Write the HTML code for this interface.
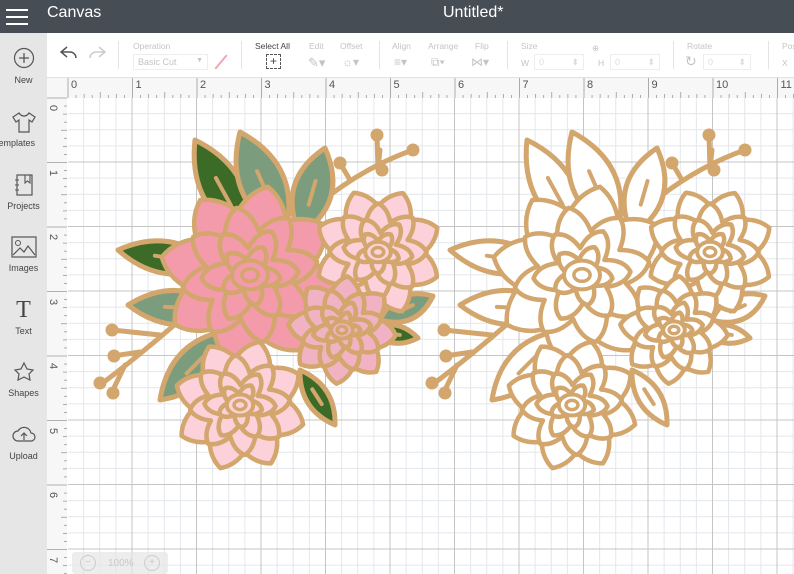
<!DOCTYPE html>
<html><head><meta charset="utf-8">
<style>
*{margin:0;padding:0;box-sizing:border-box}
body{width:794px;height:574px;overflow:hidden;font-family:"Liberation Sans",sans-serif;background:#fff;position:relative}
#top{position:absolute;left:0;top:0;width:794px;height:33px;background:#464d55;color:#fff}
#top .t{position:absolute;left:47px;top:4px;font-size:16px}
#top .u{position:absolute;left:443px;top:4px;font-size:16px}
.hb{position:absolute;left:6px;width:22px;height:2px;background:#fff}
#tool{position:absolute;left:47px;top:33px;width:747px;height:45px;background:#fff;border-bottom:1px solid #e2e2e2}
.lbl{position:absolute;font-size:8.5px;color:#c4c4c4}
.sep{position:absolute;top:8px;width:1px;height:28px;background:#e4e4e4}
#side{position:absolute;left:0;top:33px;width:47px;height:541px;background:#e6e6e7}
.si{position:absolute;width:47px;text-align:center;font-size:9px;color:#444}
#rtop{position:absolute;left:47px;top:78px;width:747px;height:20px;background:#f7f7f7}
#rleft{position:absolute;left:47px;top:98px;width:20px;height:476px;background:#f7f7f7}
#grid{position:absolute;left:68px;top:98px;width:726px;height:476px;
background-image:
linear-gradient(to right,#c4c4c4 1px,transparent 1px),
linear-gradient(to bottom,#c4c4c4 1px,transparent 1px),
linear-gradient(to right,#e3e6eb 1px,transparent 1px),
linear-gradient(to bottom,#e3e6eb 1px,transparent 1px);
background-size:64.5px 64.5px,64.5px 64.5px,16.125px 16.125px,16.125px 16.125px;background-position:-1px -1px}
.rn{position:absolute;font-size:11px;color:#555}
</style></head><body>
<div id="top">
<div class="hb" style="top:9px"></div><div class="hb" style="top:16px"></div><div class="hb" style="top:23px"></div>
<div class="t">Canvas</div><div class="u">Untitled*</div></div>
<div id="side">
<div class="si" style="top:14px"><svg width="22" height="22"><circle cx="11" cy="11" r="9.5" fill="none" stroke="#555" stroke-width="1.2"/><path d="M11 6v10M6 11h10" stroke="#555" stroke-width="1.3"/></svg></div>
<div class="si" style="top:42px">New</div>
<div class="si" style="top:78px"><svg width="26" height="22"><path d="M8 2l-6 4 3 5 3-2v12h10V9l3 2 3-5-6-4q-2 3-5 3t-5-3z" fill="none" stroke="#555" stroke-width="1.2"/></svg></div>
<div class="si" style="top:105px;text-align:left;left:-6px">Templates</div>
<div class="si" style="top:140px"><svg width="22" height="24"><rect x="4" y="2" width="15" height="20" fill="none" stroke="#555" stroke-width="1.2"/><path d="M2 7h4M2 12h4M2 17h4M12 2v8l2.5-2 2.5 2V2" fill="none" stroke="#555" stroke-width="1.1"/></svg></div>
<div class="si" style="top:168px">Projects</div>
<div class="si" style="top:203px"><svg width="26" height="22"><rect x="1" y="1" width="24" height="20" fill="none" stroke="#555" stroke-width="1.2"/><circle cx="7" cy="7" r="2.5" fill="none" stroke="#555"/><path d="M2 19l7-7 4 4 4-6 7 9" fill="none" stroke="#555" stroke-width="1.2"/></svg></div>
<div class="si" style="top:230px">Images</div>
<div class="si" style="top:264px;font-size:24px;font-family:'Liberation Serif',serif;color:#444">T</div>
<div class="si" style="top:293px">Text</div>
<div class="si" style="top:328px"><svg width="24" height="24"><path d="M12 2l3 6 6 1-4 4 1 6-6-3-6 3 1-6-4-4 6-1z" fill="none" stroke="#555" stroke-width="1.2"/></svg></div>
<div class="si" style="top:355px">Shapes</div>
<div class="si" style="top:392px"><svg width="24" height="20"><path d="M6 16a5 5 0 010-10 7 7 0 0113 2 4 4 0 010 8z" fill="none" stroke="#555" stroke-width="1.2"/><path d="M12 15V9M9 11l3-3 3 3" fill="none" stroke="#555" stroke-width="1.2"/></svg></div>
<div class="si" style="top:418px">Upload</div>
</div>
<div id="tool">
<svg style="position:absolute;left:12px;top:12px" width="20" height="16"><path d="M8 2L2 7l6 5M2 7h9a6 6 0 016 6" fill="none" stroke="#555" stroke-width="1.5"/></svg>
<svg style="position:absolute;left:40px;top:12px" width="20" height="16"><path d="M12 2l6 5-6 5M18 7H9a6 6 0 00-6 6" fill="none" stroke="#ccc" stroke-width="1.5"/></svg>
<div class="sep" style="left:71px"></div>
<div class="lbl" style="left:86px;top:8px">Operation</div>
<div style="position:absolute;left:86px;top:21px;width:75px;height:16px;border:1px solid #eee;font-size:9px;color:#c4c4c4;padding:2px 4px">Basic Cut <span style="float:right;font-size:7px">▼</span></div>
<div style="position:absolute;left:165px;top:28px;width:18px;height:2px;background:#f2a7b0;transform:rotate(-50deg)"></div>
<div class="sep" style="left:194px"></div>
<div class="lbl" style="left:208px;top:8px;color:#444">Select All</div>
<div style="position:absolute;left:219px;top:21px;width:15px;height:15px;border:1px dashed #555;font-size:12px;line-height:13px;text-align:center;color:#444">+</div>
<div class="lbl" style="left:262px;top:8px">Edit</div>
<div class="lbl" style="left:293px;top:8px">Offset</div>
<div class="lbl" style="left:261px;top:22px;font-size:13px">✎▾</div>
<div class="lbl" style="left:295px;top:22px;font-size:12px">☼▾</div>
<div class="sep" style="left:332px"></div>
<div class="lbl" style="left:345px;top:8px">Align</div>
<div class="lbl" style="left:381px;top:8px">Arrange</div>
<div class="lbl" style="left:428px;top:8px">Flip</div>
<div class="lbl" style="left:347px;top:22px;font-size:12px">≡▾</div>
<div class="lbl" style="left:384px;top:22px;font-size:12px">⧉▾</div>
<div class="lbl" style="left:424px;top:22px;font-size:12px">⋈▾</div>
<div class="sep" style="left:460px"></div>
<div class="lbl" style="left:474px;top:8px">Size</div>
<div class="lbl" style="left:545px;top:10px">⊕</div>
<div class="lbl" style="left:474px;top:25px">W</div>
<div style="position:absolute;left:487px;top:21px;width:50px;height:16px;border:1px solid #eee;font-size:9px;color:#ddd;padding:2px 4px">0<span style="float:right">⬍</span></div>
<div class="lbl" style="left:551px;top:25px">H</div>
<div style="position:absolute;left:563px;top:21px;width:50px;height:16px;border:1px solid #eee;font-size:9px;color:#ddd;padding:2px 4px">0<span style="float:right">⬍</span></div>
<div class="sep" style="left:626px"></div>
<div class="lbl" style="left:640px;top:8px">Rotate</div>
<div class="lbl" style="left:638px;top:20px;font-size:14px">↻</div>
<div style="position:absolute;left:656px;top:21px;width:48px;height:16px;border:1px solid #eee;font-size:9px;color:#ddd;padding:2px 4px">0<span style="float:right">⬍</span></div>
<div class="sep" style="left:721px"></div>
<div class="lbl" style="left:735px;top:8px">Pos</div>
<div class="lbl" style="left:735px;top:25px">X</div>
</div>
<div id="rtop"></div><div id="rleft"></div>
<div id="grid"></div>
<svg id="rul" style="position:absolute;left:0;top:0" width="794" height="574"></svg>
<div id="labels"></div>
<svg id="art" style="position:absolute;left:0;top:0" width="794" height="574"></svg>
<div style="position:absolute;left:72px;top:552px;width:96px;height:22px;background:rgba(230,230,230,.7);border-radius:3px;color:#c8c8c8;font-size:10px">
<span style="position:absolute;left:8px;top:3px;width:16px;height:16px;border:1px solid #ccc;border-radius:50%;text-align:center;line-height:14px">−</span>
<span style="position:absolute;left:36px;top:6px">100%</span>
<span style="position:absolute;left:72px;top:3px;width:16px;height:16px;border:1px solid #ccc;border-radius:50%;text-align:center;line-height:14px">+</span></div>
<script>
var NS="http://www.w3.org/2000/svg",U=64.5,OX=68,OY=98;
var r=document.getElementById('rul'),s='';
for(var i=0;i<12*8;i++){var x=OX+i*U/8;var h=i%8==0?20:(i%4==0?6:(i%2==0?4:3));s+='<line x1="'+x+'" x2="'+x+'" y1="'+(98-h)+'" y2="98" stroke="#999" stroke-width="0.8"/>';}
for(var i=0;i<8*8;i++){var y=OY+i*U/8;var h=i%8==0?20:(i%4==0?6:(i%2==0?4:3));s+='<line y1="'+y+'" y2="'+y+'" x1="'+(67-h)+'" x2="67" stroke="#999" stroke-width="0.8"/>';}
r.innerHTML=s;
var L='';for(var i=0;i<12;i++)L+='<div class="rn" style="left:'+(OX+i*U+3)+'px;top:79px">'+i+'</div>';
for(var i=0;i<8;i++)L+='<div class="rn" style="left:50px;top:'+(OY+i*U+4)+'px;transform:rotate(90deg)">'+i+'</div>';
document.getElementById('labels').innerHTML=L;
var T="#d2a66c";
function star(cx,cy,n,R,ri,rot){var p='';for(var i=0;i<n;i++){var a=rot+i*2*Math.PI/n,b=a+Math.PI/n,c=a-Math.PI/n;
var bx=cx+ri*Math.cos(c),by=cy+ri*Math.sin(c);
p+=(i?'L':'M')+bx.toFixed(1)+','+by.toFixed(1);
var k1=a-Math.PI/n*0.55,k2=a+Math.PI/n*0.55;
p+='Q'+(cx+R*0.92*Math.cos(k1)).toFixed(1)+','+(cy+R*0.92*Math.sin(k1)).toFixed(1)+' '+(cx+R*Math.cos(a)).toFixed(1)+','+(cy+R*Math.sin(a)).toFixed(1);
p+='Q'+(cx+R*0.92*Math.cos(k2)).toFixed(1)+','+(cy+R*0.92*Math.sin(k2)).toFixed(1)+' '+(cx+ri*Math.cos(b)).toFixed(1)+','+(cy+ri*Math.sin(b)).toFixed(1);}
return p+'Z';}
function flower(cx,cy,R,f,rot){var o='';var ls=[[8,1,.72],[8,.76,.5],[6,.54,.3],[5,.34,.17]];
ls.forEach(function(l,j){o+='<path d="'+star(cx,cy,l[0],R*l[1],R*l[2],rot+j*0.39)+'" fill="'+f+'" stroke="'+T+'" stroke-width="4.5" stroke-linejoin="round"/>';});
o+='<ellipse cx="'+cx+'" cy="'+cy+'" rx="'+R*.2+'" ry="'+R*.16+'" fill="'+f+'" stroke="'+T+'" stroke-width="4"/>';
o+='<ellipse cx="'+cx+'" cy="'+cy+'" rx="'+R*.09+'" ry="'+R*.07+'" fill="'+f+'" stroke="'+T+'" stroke-width="3.5"/>';return o;}
function leaf(x1,y1,x2,y2,w,f){var mx=(x1+x2)/2,my=(y1+y2)/2,dx=x2-x1,dy=y2-y1,l=Math.hypot(dx,dy),px=-dy/l*w,py=dx/l*w;
return '<path d="M'+x1+','+y1+'Q'+(mx+px)+','+(my+py)+' '+x2+','+y2+'Q'+(mx-px)+','+(my-py)+' '+x1+','+y1+'Z" fill="'+f+'" stroke="'+T+'" stroke-width="5" stroke-linejoin="round"/>'+
'<path d="M'+(x1+dx*.35)+','+(y1+dy*.35)+'L'+(x1+dx*.62)+','+(y1+dy*.62)+'" stroke="'+T+'" stroke-width="4" stroke-linecap="round"/>';}
function bouquet(ox,c){var o='<g transform="translate('+ox+',0)">';
var DG=c?'#3c6a27':'#fff',GG=c?'#7c9d7d':'#fff',P1=c?'#f39bab':'#fff',P2=c?'#fcd1d9':'#fff',P3=c?'#f1b3c3':'#fff';
o+='<path d="M330,195Q370,165 413,150M350,180L340,163M378,168L380,150M378,168L377,135" stroke="'+T+'" stroke-width="5" fill="none" stroke-linecap="round"/>';
o+='<path d="M180,320Q140,355 100,385M160,335L112,330M140,352L113,356M125,365L112,392" stroke="'+T+'" stroke-width="5" fill="none" stroke-linecap="round"/>';
[[377,135],[413,150],[340,163],[382,170],[112,330],[114,356],[100,383],[113,393]].forEach(function(b){o+='<circle cx="'+b[0]+'" cy="'+b[1]+'" r="6.5" fill="'+T+'"/>';});
o+=leaf(250,240,195,140,40,DG)+leaf(285,235,240,132,44,GG)+leaf(300,235,325,148,38,GG);
o+=leaf(215,265,118,250,32,DG)+leaf(225,310,128,305,34,GG)+leaf(230,330,160,400,36,GG);
o+=leaf(300,370,335,425,22,DG)+leaf(380,320,433,296,24,GG)+leaf(370,330,418,338,18,DG);
o+=flower(250,275,90,P1,0.2)+flower(378,252,64,P2,0.4)+flower(342,330,54,P3,0.1)+flower(240,405,66,P2,0.3);
return o+'</g>';}
document.getElementById('art').innerHTML=bouquet(0,true)+bouquet(332,false);
</script>
</body></html>
